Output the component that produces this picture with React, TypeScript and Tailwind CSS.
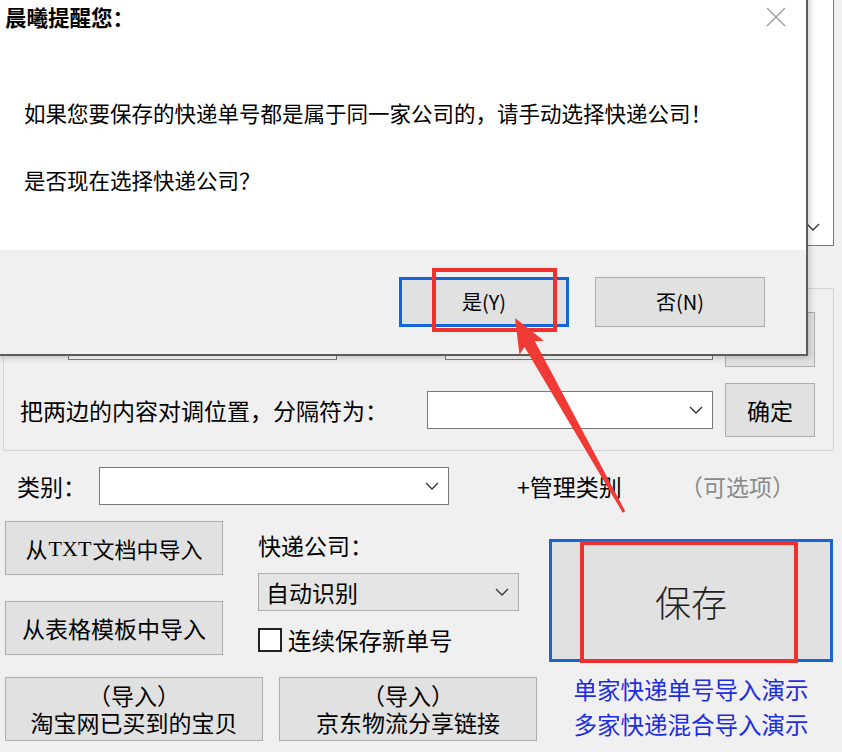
import React from "react";

function Chevron({ className = "" }: { className?: string }) {
  return (
    <svg width="14" height="8" viewBox="0 0 14 8" className={className}>
      <polyline points="1,1 7,7 13,1" fill="none" stroke="#333" strokeWidth="1.3" />
    </svg>
  );
}

function Btn({ className = "", children }: { className?: string; children: React.ReactNode }) {
  return (
    <div className={"bg-[#e1e1e1] border border-[#adadad] flex items-center justify-center text-black " + className}>
      {children}
    </div>
  );
}

export default function App() {
  return (
    <div className="relative w-[842px] h-[752px] overflow-hidden bg-[#f0f0f0] font-['Noto_Sans_CJK_SC','Noto_Sans',sans-serif] text-black">
      {/* top large box (behind dialog) */}
      <div className="ml-[3px] w-[831px] h-[246px] bg-white border-r border-b border-[#7a7a7a] flex items-end justify-end pr-[13px] pb-[14px]">
        <Chevron />
      </div>

      {/* group box */}
      <div className="mt-[42px] ml-[3px] w-[831px] h-[163px] border border-[#d5d5d5] flex flex-col">
        <div className="mt-[23px] flex items-end h-[55px]">
          <div className="ml-[64px] w-[269px] h-[38px] mb-[7px] bg-white border border-[#7a7a7a]" />
          <div className="ml-[108px] w-[268px] h-[38px] mb-[7px] bg-white border border-[#7a7a7a]" />
          <Btn className="ml-[12px] w-[90px] h-[55px] text-[23px]">
            {""}
          </Btn>
        </div>
        <div className="mt-[16px] flex items-center h-[54px]">
          <div className="w-[423px] pl-[16px] text-[23px] leading-[30px] whitespace-nowrap">把两边的内容对调位置，分隔符为：</div>
          <div className="w-[286px] h-[38px] bg-white border border-[#7a7a7a] flex items-center justify-end pr-[9px]">
            <Chevron />
          </div>
          <Btn className="ml-[12px] w-[90px] h-[54px] text-[23px]">确定</Btn>
        </div>
      </div>

      {/* 类别 row */}
      <div className="mt-[16px] flex items-center h-[38px]">
        <div className="w-[99px] pl-[17px] text-[23px] leading-[30px]">类别：</div>
        <div className="w-[350px] h-[38px] bg-white border border-[#7a7a7a] flex items-center justify-end pr-[9px]">
          <Chevron />
        </div>
        <div className="ml-[68px] w-[163px] text-[23px] leading-[30px] whitespace-nowrap">+管理类别</div>
        <div className="text-[23px] leading-[30px] text-[#8a8a8a] whitespace-nowrap">（可选项）</div>
      </div>

      {/* lower area */}
      <div className="mt-[16px] flex">
        <div className="pl-[5px] w-[537px] flex flex-col">
          <div className="flex">
            <div className="w-[218px] flex flex-col gap-[26px]">
              <Btn className="h-[54px] text-[22px] whitespace-nowrap">
                从<span className="font-['Liberation_Serif',serif] px-[1px]">TXT</span>文档中导入
              </Btn>
              <Btn className="h-[54px] text-[23px] whitespace-nowrap">从表格模板中导入</Btn>
            </div>
            <div className="ml-[35px] flex flex-col">
              <div className="mt-[9px] h-[30px] leading-[30px] text-[23px] whitespace-nowrap">快递公司：</div>
              <div className="mt-[13px] w-[261px] h-[38px] bg-[#e5e5e5] border border-[#acacac] flex items-center justify-between pl-[7px] pr-[9px]">
                <span className="text-[23px] leading-[30px]">自动识别</span>
                <Chevron />
              </div>
              <div className="mt-[17px] flex items-center h-[24px]">
                <div className="w-[24px] h-[24px] bg-white border-2 border-[#222]" />
                <span className="ml-[6px] text-[23.5px] leading-[30px] whitespace-nowrap">连续保存新单号</span>
              </div>
            </div>
          </div>
          <div className="mt-[22px] flex gap-[16px]">
            <Btn className="w-[258px] h-[64px] flex-col text-[23px] leading-[27px]">
              <span>（导入）</span>
              <span className="whitespace-nowrap">淘宝网已买到的宝贝</span>
            </Btn>
            <Btn className="w-[258px] h-[64px] flex-col text-[23px] leading-[27px]">
              <span>（导入）</span>
              <span className="whitespace-nowrap">京东物流分享链接</span>
            </Btn>
          </div>
        </div>
        <div className="ml-[12px] w-[284px] mt-[18px] flex flex-col items-center">
          <div className="w-[284px] h-[123px] border-[3px] border-[#1466d8] bg-[#e1e1e1] flex items-center justify-center text-[36px] font-light text-[#222]">
            保存
          </div>
          <div className="mt-[10px] text-[23.5px] leading-[35px] text-[#1d2de0] text-center whitespace-nowrap">
            <div>单家快递单号导入演示</div>
            <div>多家快递混合导入演示</div>
          </div>
        </div>
      </div>

      {/* dialog */}
      <div className="absolute left-[-10px] top-[-10px] w-[818px] h-[366px] bg-[#f0f0f0] border-r-2 border-b-2 border-[#5c5c5c] shadow-[2px_2px_6px_rgba(0,0,0,0.18)] flex flex-col">
        <div className="h-[260px] bg-white flex flex-col">
          <div className="pt-[15px] flex items-center justify-between pl-[15px] pr-[20px]">
            <span className="text-[21.5px] leading-[24px] font-bold">晨曦提醒您：</span>
            <svg width="20" height="20" viewBox="0 0 20 20">
              <line x1="1" y1="1" x2="19" y2="19" stroke="#9a9a9a" strokeWidth="1.2" />
              <line x1="19" y1="1" x2="1" y2="19" stroke="#9a9a9a" strokeWidth="1.2" />
            </svg>
          </div>
          <div className="pl-[34px] mt-[72px] text-[21.5px] leading-[24px] whitespace-nowrap">
            如果您要保存的快递单号都是属于同一家公司的，请手动选择快递公司！
          </div>
          <div className="pl-[34px] mt-[43px] text-[21.5px] leading-[24px] whitespace-nowrap">是否现在选择快递公司？</div>
        </div>
        <div className="flex-1 flex justify-end items-start pt-[27px] pr-[41px] gap-[26px]">
          <div className="w-[170px] h-[50px] border-[3px] border-[#1466d8] bg-[#e1e1e1] flex items-center justify-center text-[20px]">
            是(Y)
          </div>
          <div className="w-[170px] h-[50px] border border-[#adadad] bg-[#e1e1e1] flex items-center justify-center text-[20px]">
            否(N)
          </div>
        </div>
      </div>

      {/* annotations */}
      <div className="absolute left-[432px] top-[268px] w-[125px] h-[64px] border-4 border-[#f0302c]" />
      <div className="absolute left-[580px] top-[541px] w-[218px] h-[122px] border-4 border-[#f0302c]" />
      <svg className="absolute left-0 top-0 pointer-events-none" width="842" height="752" viewBox="0 0 842 752">
        <polygon
          points="515,318 543.9,340.7 534.9,341.3 625.3,511.3 622.7,512.7 524.5,347.1 519.5,354.5"
          fill="#f03a35"
        />
      </svg>
    </div>
  );
}
